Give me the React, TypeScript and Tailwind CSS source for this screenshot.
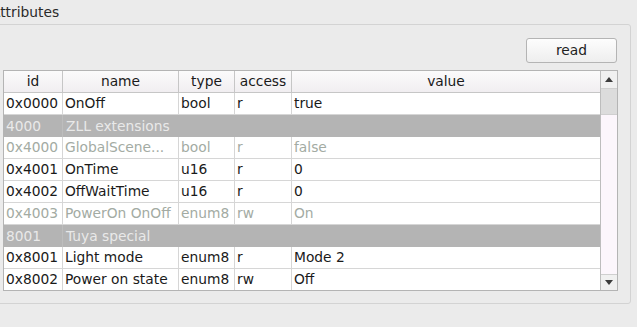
import React from "react";

type Row =
  | { kind: "attr"; id: string; name: string; type: string; access: string; value: string; disabled?: boolean }
  | { kind: "group"; id: string; name: string };

const rows: Row[] = [
  { kind: "attr", id: "0x0000", name: "OnOff", type: "bool", access: "r", value: "true" },
  { kind: "group", id: "4000", name: "ZLL extensions" },
  { kind: "attr", id: "0x4000", name: "GlobalScene...", type: "bool", access: "r", value: "false", disabled: true },
  { kind: "attr", id: "0x4001", name: "OnTime", type: "u16", access: "r", value: "0" },
  { kind: "attr", id: "0x4002", name: "OffWaitTime", type: "u16", access: "r", value: "0" },
  { kind: "attr", id: "0x4003", name: "PowerOn OnOff", type: "enum8", access: "rw", value: "On", disabled: true },
  { kind: "group", id: "8001", name: "Tuya special" },
  { kind: "attr", id: "0x8001", name: "Light mode", type: "enum8", access: "r", value: "Mode 2" },
  { kind: "attr", id: "0x8002", name: "Power on state", type: "enum8", access: "rw", value: "Off" },
];

const cols = "grid grid-cols-[59px_116px_56px_57px_1fr]";

function HeaderCell({ children, last }: { children: React.ReactNode; last?: boolean }) {
  return (
    <div
      className={`flex items-center justify-center h-full ${last ? "" : "border-r border-[#c6c6c6]"}`}
    >
      {children}
    </div>
  );
}

function Cell({ children, last }: { children: React.ReactNode; last?: boolean }) {
  return (
    <div
      className={`flex items-center h-full pl-[2px] whitespace-nowrap overflow-hidden ${
        last ? "" : "border-r border-[#d6d6d6]"
      }`}
    >
      {children}
    </div>
  );
}

export default function App() {
  return (
    <div
      className="w-[637px] h-[327px] bg-[#ebebeb] overflow-hidden text-[13.8px] text-[#1a1a1a]"
      style={{ fontFamily: '"DejaVu Sans", sans-serif' }}
    >
      {/* Group title */}
      <div className="h-[25px] flex items-center -ml-[9px] text-[#2a2a2a]">Attributes</div>

      {/* Group box */}
      <div className="-ml-[4px] -mt-[1px] w-[635px] h-[280px] border border-[#d3d3d3] rounded-[3px] pt-[13px] pl-[6px] pr-[13px] flex flex-col">
        <div className="flex justify-end h-[24px]">
          <button className="w-[91px] h-[25px] rounded-[3px] border border-[#b4b4b4] bg-gradient-to-b from-[#fdfdfd] to-[#eeeeee] text-[#222]">
            read
          </button>
        </div>

        {/* Table */}
        <div className="mt-[8px] w-[615px] h-[221px] border border-[#b4b4b4] bg-white flex overflow-hidden">
          <div className="flex-1 flex flex-col border-r border-[#bdbdbd]">
            <div className={`${cols} h-[22px] shrink-0 border-b border-[#c6c6c6] bg-gradient-to-b from-[#fbfbfb] to-[#f1eef1]`}>
              <HeaderCell>id</HeaderCell>
              <HeaderCell>name</HeaderCell>
              <HeaderCell>type</HeaderCell>
              <HeaderCell>access</HeaderCell>
              <HeaderCell last>value</HeaderCell>
            </div>
            {rows.map((r) =>
              r.kind === "group" ? (
                <div key={r.id} className="flex h-[22px] shrink-0 bg-[#b4b4b4] text-[#e9e9e9]">
                  <div className="w-[59px] flex items-center pl-[2px] border-r border-[#bdbdbd]">{r.id}</div>
                  <div className="flex-1 flex items-center pl-[3px]">{r.name}</div>
                </div>
              ) : (
                <div
                  key={r.id}
                  className={`${cols} h-[22px] shrink-0 border-b border-[#d6d6d6] ${
                    r.disabled ? "text-[#a3aba3]" : ""
                  }`}
                >
                  <Cell>{r.id}</Cell>
                  <Cell>{r.name}</Cell>
                  <Cell>{r.type}</Cell>
                  <Cell>{r.access}</Cell>
                  <Cell last>{r.value}</Cell>
                </div>
              )
            )}
          </div>

          {/* Scrollbar */}
          <div className="w-[16px] flex flex-col bg-[#fcf6fc]">
            <div className="h-[17px] flex items-center justify-center bg-[#f0f0f0]">
              <svg width="8" height="5" viewBox="0 0 8 5">
                <path d="M0 5 L4 0 L8 5 Z" fill="#3c3c3c" />
              </svg>
            </div>
            <div className="h-[27px] bg-[#dcdcdc] border-y border-[#cfcfcf]" />
            <div className="flex-1" />
            <div className="h-[16px] flex items-center justify-center bg-[#f0f0f0] border-t border-[#cfcfcf]">
              <svg width="8" height="5" viewBox="0 0 8 5">
                <path d="M0 0 L8 0 L4 5 Z" fill="#3c3c3c" />
              </svg>
            </div>
          </div>
        </div>
      </div>
    </div>
  );
}
